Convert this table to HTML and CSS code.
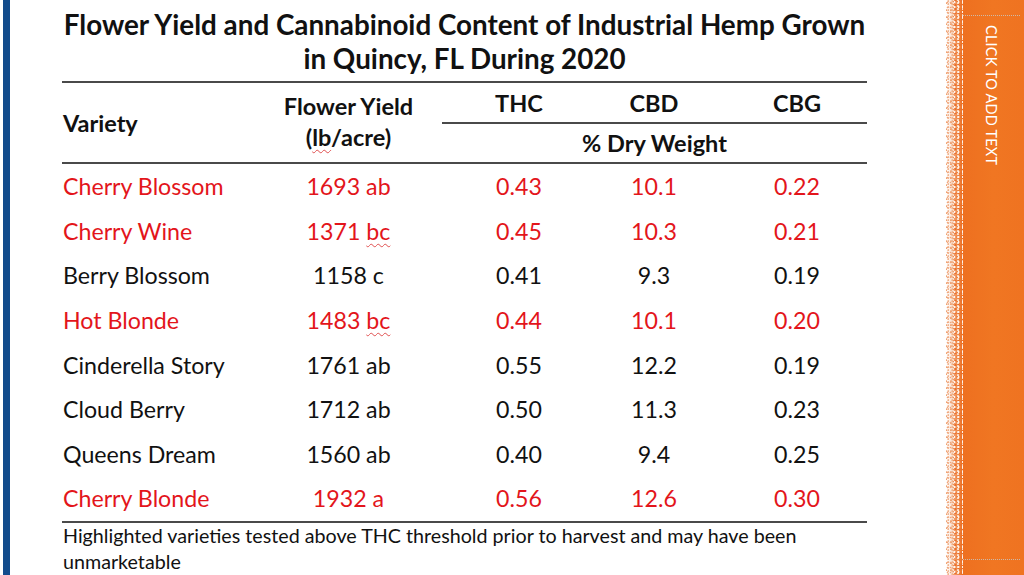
FILE: index.html
```html
<!DOCTYPE html>
<html lang="en">
<head>
<meta charset="utf-8">
<title>Flower Yield and Cannabinoid Content</title>
<link rel="stylesheet" href="styles.css">
</head>
<body>
<div class="slide">
  <div class="accent"></div>
  <main class="content">
    <h1 class="title">Flower Yield and Cannabinoid Content of Industrial Hemp Grown<br>in Quincy, FL During 2020</h1>
    <div class="head grid">
      <div class="hcell variety"><span>Variety</span></div>
      <div class="hcell yield"><span>Flower Yield<br>(<span class="sp">lb</span>/acre)</span></div>
      <div class="hcell thc"><span>THC</span></div>
      <div class="hcell"><span>CBD</span></div>
      <div class="hcell"><span>CBG</span></div>
      <div class="hcell unit"><span>% Dry Weight</span></div>
    </div>
    <div class="body grid rows">
      <div class="cell name red"><span>Cherry Blossom</span></div><div class="cell red"><span>1693 ab</span></div><div class="cell thc red"><span>0.43</span></div><div class="cell red"><span>10.1</span></div><div class="cell red"><span>0.22</span></div>
      <div class="cell name red"><span>Cherry Wine</span></div><div class="cell red"><span>1371 <span class="sp">bc</span></span></div><div class="cell thc red"><span>0.45</span></div><div class="cell red"><span>10.3</span></div><div class="cell red"><span>0.21</span></div>
      <div class="cell name"><span>Berry Blossom</span></div><div class="cell"><span>1158 c</span></div><div class="cell thc"><span>0.41</span></div><div class="cell"><span>9.3</span></div><div class="cell"><span>0.19</span></div>
      <div class="cell name red"><span>Hot Blonde</span></div><div class="cell red"><span>1483 <span class="sp">bc</span></span></div><div class="cell thc red"><span>0.44</span></div><div class="cell red"><span>10.1</span></div><div class="cell red"><span>0.20</span></div>
      <div class="cell name"><span>Cinderella Story</span></div><div class="cell"><span>1761 ab</span></div><div class="cell thc"><span>0.55</span></div><div class="cell"><span>12.2</span></div><div class="cell"><span>0.19</span></div>
      <div class="cell name"><span>Cloud Berry</span></div><div class="cell"><span>1712 ab</span></div><div class="cell thc"><span>0.50</span></div><div class="cell"><span>11.3</span></div><div class="cell"><span>0.23</span></div>
      <div class="cell name"><span>Queens Dream</span></div><div class="cell"><span>1560 ab</span></div><div class="cell thc"><span>0.40</span></div><div class="cell"><span>9.4</span></div><div class="cell"><span>0.25</span></div>
      <div class="cell name red"><span>Cherry Blonde</span></div><div class="cell red"><span>1932 a</span></div><div class="cell thc red"><span>0.56</span></div><div class="cell red"><span>12.6</span></div><div class="cell red"><span>0.30</span></div>
    </div>
    <p class="note">Highlighted varieties tested above THC threshold prior to harvest and may have been unmarketable</p>
  </main>
  <aside class="sidebar">
    <div class="edge">
      <div class="edge-sparse"></div>
      <div class="edge-dense"></div>
    </div>
    <div class="panel">
      <div class="placeholder"><span class="ph-text">CLICK TO ADD TEXT</span></div>
    </div>
  </aside>
</div>
</body>
</html>
```
FILE: styles.css
```css
* { box-sizing: border-box; }
html, body { margin: 0; padding: 0; }
body {
  width: 1024px;
  height: 575px;
  overflow: hidden;
  background: #ffffff;
  font-family: Lato, "Liberation Sans", sans-serif;
  color: #111;
}
.slide {
  display: flex;
  width: 1024px;
  height: 575px;
}
.accent {
  width: 7px;
  margin-left: 3px;
  background: #134c8c;
  flex: none;
}
.content {
  width: 936px;
  flex: none;
  padding: 8px 0 0 52px;
}
.title {
  width: 805px;
  margin: 0 0 5px;
  font-size: 27.8px;
  line-height: 34px;
  font-weight: 700;
  text-align: center;
  color: #111;
}
.grid {
  width: 805px;
  display: grid;
  grid-template-columns: 193px 187px 139px 146px 140px;
}
.head {
  grid-template-rows: 39px 40px;
  border-top: 2px solid #4a4a4a;
  border-bottom: 2px solid #4a4a4a;
  font-weight: 700;
  font-size: 23.5px;
}
.hcell {
  display: flex;
  align-items: center;
  justify-content: center;
  text-align: center;
}
.variety {
  grid-row: 1 / 3;
  grid-column: 1;
  justify-content: flex-start;
  padding-left: 1px;
}
.yield {
  grid-row: 1 / 3;
  grid-column: 2;
  line-height: 31px;
  padding-bottom: 1px;
}
.unit {
  grid-row: 2;
  grid-column: 3 / 6;
  border-top: 2px solid #4a4a4a;
}
.rows {
  grid-auto-rows: 44.6px;
  border-bottom: 2px solid #4a4a4a;
  font-size: 23.2px;
}
.cell {
  display: flex;
  align-items: center;
  justify-content: center;
  white-space: nowrap;
}
.cell.name {
  justify-content: flex-start;
  padding-left: 1px;
}
.thc { padding-left: 15px; }
.red { color: #e3151b; }
.sp {
  text-decoration: underline wavy #e05050;
  text-decoration-thickness: 1px;
  text-underline-offset: 3px;
}
.note {
  margin: 0;
  padding-left: 1px;
  width: 805px;
  font-size: 19.7px;
  line-height: 26px;
  color: #111;
}
.sidebar {
  flex: none;
  width: 78px;
  display: flex;
}
.edge {
  flex: none;
  width: 17px;
  display: flex;
}
.edge-sparse {
  width: 7px;
  background:
    radial-gradient(circle at 50% 50%, #f2a479 0.6px, transparent 1.1px) 0 0 / 3px 5px,
    radial-gradient(circle at 30% 70%, #f0b48e 0.6px, transparent 1.1px) 1px 2px / 4px 3px,
    radial-gradient(circle at 60% 30%, #ee9a66 0.6px, transparent 1.1px) 2px 1px / 5px 7px,
    linear-gradient(90deg, #ffffff 0%, #fdf1e9 50%, #f8d6c0 100%);
}
.edge-dense {
  width: 10px;
  background:
    radial-gradient(circle at 40% 40%, #fff4ec 0.7px, transparent 1.2px) 0 0 / 4px 5px,
    radial-gradient(circle at 60% 70%, #fbe0cd 0.7px, transparent 1.2px) 2px 1px / 5px 3px,
    radial-gradient(circle at 50% 50%, #e9702e 0.8px, transparent 1.3px) 1px 3px / 3px 4px,
    linear-gradient(90deg, #f2a070 0%, #ef8a4a 50%, #ee7628 85%, #ee7222 100%);
}
.panel {
  flex: 1;
  background: linear-gradient(90deg, #ee7020 0%, #f07622 50%, #ef7321 100%);
  padding: 15px 4px 15px 0;
}
.placeholder {
  height: 100%;
  border-top: 1px dotted #cdb9a8;
  border-bottom: 1px dotted #cdb9a8;
  display: flex;
  justify-content: center;
  padding-top: 9px;
}
.ph-text {
  writing-mode: vertical-rl;
  color: #ffffff;
  font-size: 14.5px;
  letter-spacing: 0.2px;
}
```
